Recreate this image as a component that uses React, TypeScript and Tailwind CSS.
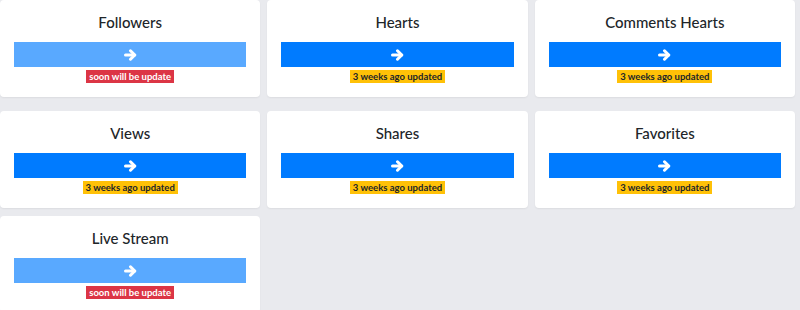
interface Service {
  title: string;
  ready: boolean;
}

const topRow: Service[] = [
  { title: 'Followers', ready: false },
  { title: 'Hearts', ready: true },
  { title: 'Comments Hearts', ready: true },
]

const restRows: Service[] = [
  { title: 'Views', ready: true },
  { title: 'Shares', ready: true },
  { title: 'Favorites', ready: true },
  { title: 'Live Stream', ready: false },
]

function ArrowIcon() {
  return (
    <svg width="13" height="12" viewBox="0 0 13 12" fill="none" stroke="currentColor" strokeWidth="3" strokeLinecap="round" strokeLinejoin="round">
      <path d="M1.5 6h9" />
      <path d="M6.5 1.8L10.8 6 6.5 10.2" />
    </svg>
  )
}

function ServiceCard({ service }: { service: Service }) {
  return (
    <div className="bg-white rounded-[4px] shadow-[0_1px_2px_rgba(0,0,0,0.06)] h-[97px] px-[14px] pt-[11px] flex flex-col items-center">
      <h5 className="text-[15px] leading-[22px] font-medium text-[#212529]">{service.title}</h5>
      <button
        className={
          service.ready
            ? 'mt-[9px] w-full h-[25px] bg-[#007bff] text-white flex items-center justify-center'
            : 'mt-[9px] w-full h-[25px] bg-[#59a9ff] text-white flex items-center justify-center'
        }
      >
        <ArrowIcon />
      </button>
      {service.ready ? (
        <span className="mt-[3px] px-[3px] h-[13px] leading-[13px] bg-[#ffc107] text-[#212529] text-[9.5px] font-bold">
          3 weeks ago updated
        </span>
      ) : (
        <span className="mt-[3px] px-[3px] h-[13px] leading-[13px] bg-[#dc3545] text-white text-[9.5px] font-bold">
          soon will be update
        </span>
      )}
    </div>
  )
}

export default function App() {
  return (
    <div
      className="min-h-[310px] w-[800px] bg-[#e9eaee] overflow-hidden"
      style={{ fontFamily: 'Lato, "Noto Sans", sans-serif' }}
    >
      <div className="w-[795px]">
        <div className="grid grid-cols-3 gap-x-[7px] mb-[14px]">
          {topRow.map((s) => (
            <ServiceCard key={s.title} service={s} />
          ))}
        </div>
        <div className="grid grid-cols-3 gap-x-[7px] gap-y-[8px]">
          {restRows.map((s) => (
            <ServiceCard key={s.title} service={s} />
          ))}
        </div>
      </div>
    </div>
  )
}
